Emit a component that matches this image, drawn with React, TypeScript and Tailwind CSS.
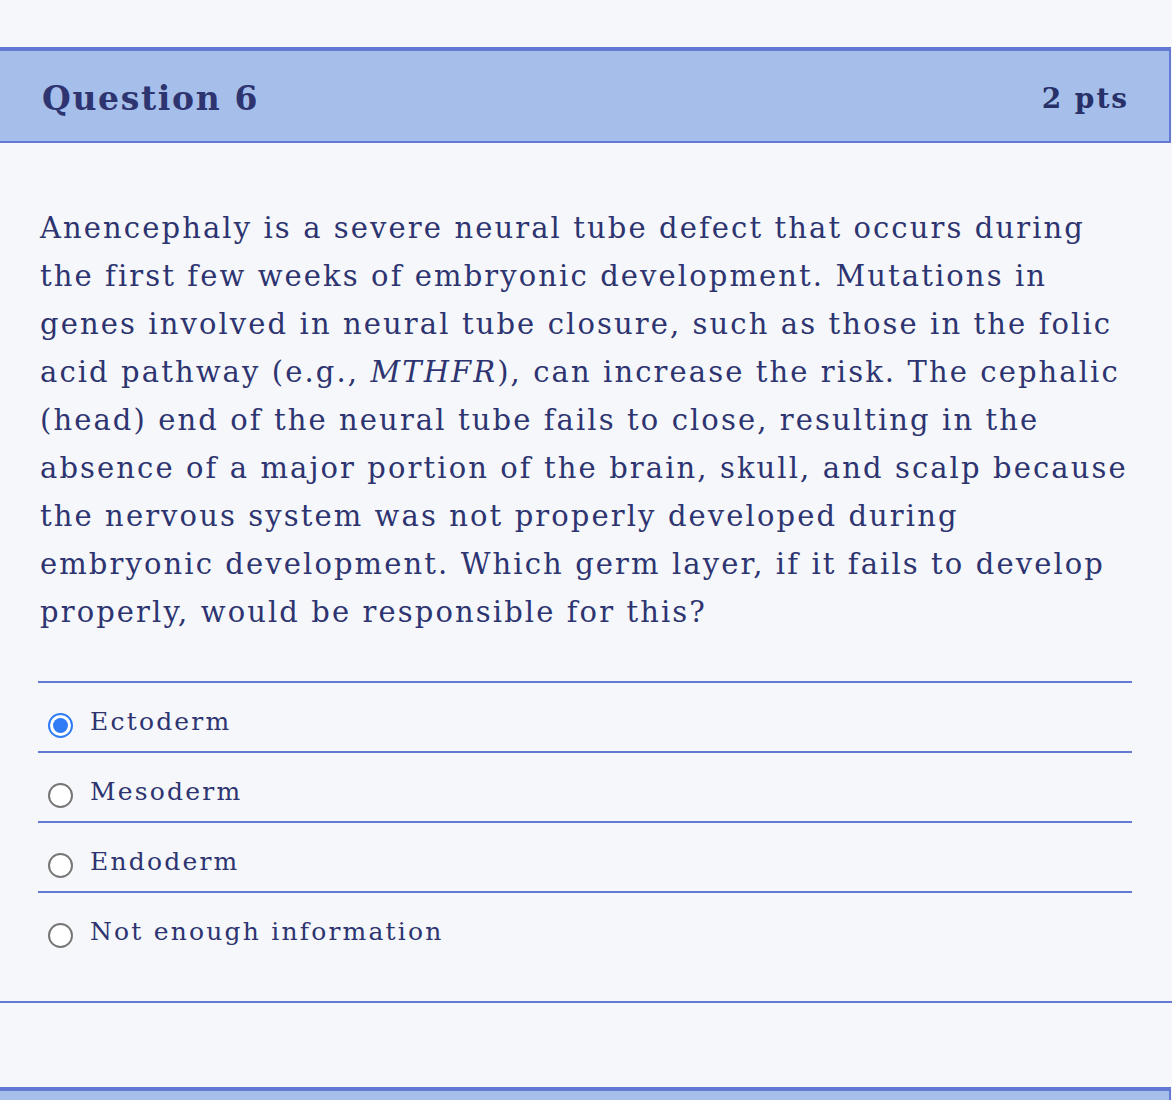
import { useState } from 'react';

const answers = ['Ectoderm', 'Mesoderm', 'Endoderm', 'Not enough information'];

function Radio({ checked }: { checked: boolean }) {
  return checked ? (
    <span className="w-[25px] h-[25px] rounded-full border-[2.5px] border-[#2f7cf6] bg-white flex items-center justify-center shrink-0">
      <span className="w-[15px] h-[15px] rounded-full bg-[#2f7cf6]" />
    </span>
  ) : (
    <span className="w-[25px] h-[25px] rounded-full border-[2.5px] border-[#767676] bg-white shrink-0" />
  );
}

export default function App() {
  const [selected, setSelected] = useState(0);

  return (
    <div className="w-[1172px] min-h-[1100px] bg-[#f5f7fb] pt-[47px] text-[#2d3470] font-['DejaVu_Serif',serif] overflow-hidden">
      {/* Question header */}
      <div className="mr-[1px] h-[96px] bg-[#a5bfea] border-t-4 border-b-2 border-r-2 border-[#6479d4] flex items-center justify-between pl-[42px] pr-[40px] pt-[6px]">
        <h2 className="text-[33px] font-bold tracking-[0.05em] text-[#2e3470]">Question 6</h2>
        <span className="text-[28px] font-bold tracking-[0.07em] text-[#273068]">2 pts</span>
      </div>

      {/* Question body */}
      <div className="pt-[61px] pl-[40px] pr-[10px]">
        <p className="text-[29px] leading-[48px] tracking-[2.1px]">
          Anencephaly is a severe neural tube defect that occurs during<br />
          the first few weeks of embryonic development. Mutations in<br />
          genes involved in neural tube closure, such as those in the folic<br />
          acid pathway (e.g., <em>MTHFR</em>), can increase the risk. The cephalic<br />
          (head) end of the neural tube fails to close, resulting in the<br />
          absence of a major portion of the brain, skull, and scalp because<br />
          the nervous system was not properly developed during<br />
          embryonic development. Which germ layer, if it fails to develop<br />
          properly, would be responsible for this?
        </p>
      </div>

      {/* Answers */}
      <div className="mt-[45px] ml-[38px] w-[1094px]">
        {answers.map((a, i) => (
          <label
            key={a}
            onClick={() => setSelected(i)}
            className="h-[70px] border-t-2 border-[#6479d4] flex items-center gap-[17px] pl-[10px] pt-[16px] cursor-pointer"
          >
            <Radio checked={selected === i} />
            <span className="text-[25px] tracking-[2.2px] -mt-[6px]">{a}</span>
          </label>
        ))}
      </div>

      <div className="mt-[40px] border-b-2 border-[#6479d4]" />

      {/* Next question header (cut off) */}
      <div className="mt-[84px] mr-[1px] h-[40px] bg-[#a5bfea] border-t-4 border-r-2 border-[#6479d4]" />
    </div>
  );
}
